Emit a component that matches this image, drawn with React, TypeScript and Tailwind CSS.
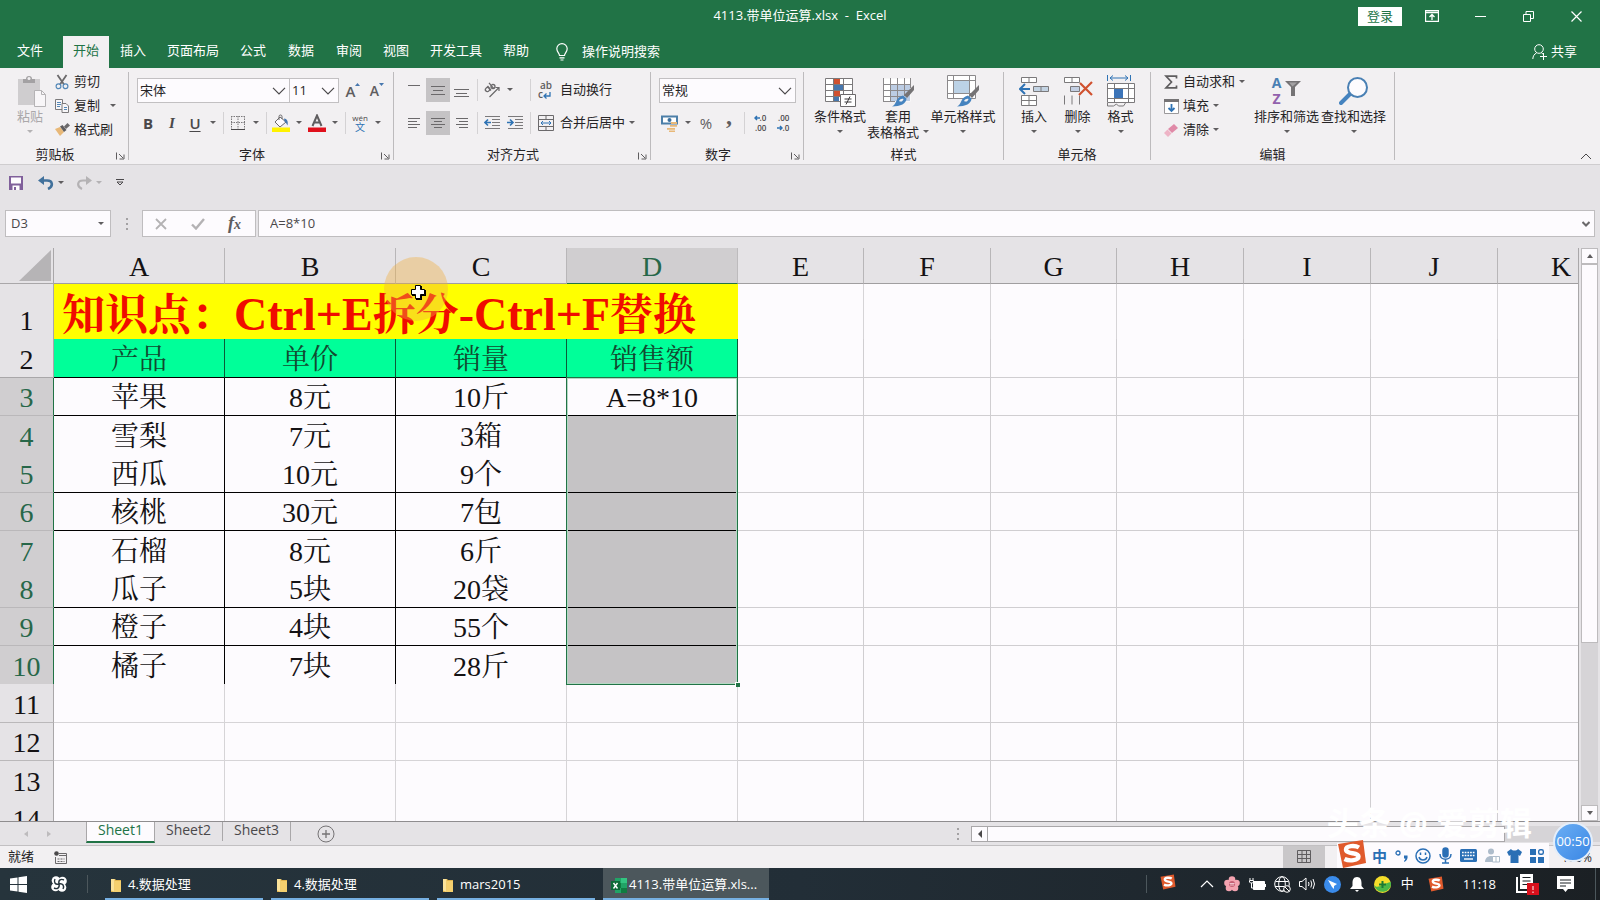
import React from "react";

const UI = "font-['Open_Sans','Noto_Sans_CJK_SC',sans-serif]";
const SONG = "font-['Liberation_Serif','Noto_Serif_CJK_SC','Noto_Sans_CJK_SC',serif]";

/* ---------- small shared pieces ---------- */

function Caret({ faint = false }: { faint?: boolean }) {
  return (
    <svg viewBox="0 0 6 4" className={faint ? "h-1 w-1.5 text-[#b4b2b4]" : "h-1 w-1.5 text-[#5f5d5f]"}>
      <path d="M0 0h6L3 3z" fill="currentColor" />
    </svg>
  );
}

function CaretButton({ label, faint }: { label: string; faint?: boolean }) {
  return (
    <button aria-label={label} className="flex h-6 w-3.5 shrink-0 items-center justify-center">
      <Caret faint={faint} />
    </button>
  );
}

function Tool({ label, wide, on, children }: { label: string; wide?: boolean; on?: boolean; children: React.ReactNode }) {
  return (
    <button
      aria-label={label}
      className={`flex h-6 shrink-0 items-center justify-center ${wide ? "w-6" : "w-[22px]"} ${on ? "bg-[#c5c3c5]" : ""}`}
    >
      {children}
    </button>
  );
}

function Divider() {
  return <span className="mx-[3px] h-[22px] w-px shrink-0 bg-[#d4d2d4]" />;
}

function Group({ title, width, launcher, children }: { title: string; width: string; launcher?: boolean; children: React.ReactNode }) {
  return (
    <>
      <section className={`flex shrink-0 flex-col ${width}`}>
        <div className="min-h-0 flex-1">{children}</div>
        <div className="flex h-5 items-center">
          <h2 className="flex-1 text-center text-[13px] leading-5">{title}</h2>
          {launcher && (
            <button aria-label={`${title}设置`} className="flex h-5 w-[18px] items-center pl-1.5 pt-1">
              <svg viewBox="0 0 9 8" className="h-2 w-[9px]" fill="none" stroke="#5f5d5f">
                <path d="M.5 7.500V.5M3 2l4 4M8 2.500V7H3.500" />
              </svg>
            </button>
          )}
        </div>
      </section>
      <span className="my-1 w-px shrink-0 bg-[#bdbbbd]" />
    </>
  );
}

function BigButton({ icon, label, second, width, faint }: { icon: React.ReactNode; label: string; second?: string; width: string; faint?: boolean }) {
  return (
    <button className={`flex shrink-0 flex-col items-center whitespace-nowrap pt-[7px] text-[13px] leading-4 ${width} ${faint ? "text-[#aaa8aa]" : ""}`}>
      <span className="mb-px flex h-8 items-center justify-center">{icon}</span>
      <span>{label}</span>
      <span className="flex h-4 items-center gap-1">
        {second}
        <Caret faint={faint} />
      </span>
    </button>
  );
}

function SmallButton({ icon, label, caret, gap }: { icon: React.ReactNode; label: string; caret?: boolean; gap?: boolean }) {
  return (
    <button className="flex h-6 items-center whitespace-nowrap text-[13px]">
      <span className="mr-0.5 flex w-5 justify-center">{icon}</span>
      {label}
      {caret && (
        <span className={gap ? "ml-2.5" : "ml-1"}>
          <Caret />
        </span>
      )}
    </button>
  );
}

function Combo({ label, value, width, options }: { label: string; value: string; width: string; options: string[] }) {
  return (
    <span className={`relative flex h-[25px] shrink-0 items-center border border-[#c2c0c2] bg-[#fdfbfe] ${width}`}>
      <select aria-label={label} defaultValue={value} className="h-full w-full appearance-none bg-transparent pl-0.5 text-[13px] outline-none">
        {options.map((o) => (
          <option key={o}>{o}</option>
        ))}
      </select>
      <svg viewBox="0 0 14 8" className="pointer-events-none absolute right-[3px] h-2 w-3.5" fill="none" stroke="#4a484a" strokeWidth="1.200">
        <path d="M1 .8l6 6 6-6" />
      </svg>
    </span>
  );
}

/* ---------- ribbon drawings ---------- */

const PasteIcon = () => (
  <svg viewBox="0 0 30 32" className="ml-1 h-8 w-[30px]">
    <path d="M1 4h22v26H1z" fill="#cfcdcf" />
    <path d="M6 4h3a3 3 0 0 1 6 0h3v4H6z" fill="#a3a1a3" />
    <circle cx="12" cy="3.500" r="1.500" fill="#f2f0f2" />
    <path d="M17.500 15.500h7l4 4v12h-11z" fill="#f8f6f8" stroke="#b5b3b5" />
    <path d="M24.500 15.500v4h4" fill="none" stroke="#b5b3b5" />
  </svg>
);
const ScissorsIcon = () => (
  <svg viewBox="0 0 14 16" className="h-4 w-3.5" fill="none">
    <path d="M2.500 1l6.500 9.500M11.500 1L5 10.500" stroke="#6b696b" strokeWidth="1.800" />
    <circle cx="3.500" cy="12.300" r="2.400" stroke="#5488b8" strokeWidth="1.200" />
    <circle cx="10.500" cy="12.300" r="2.400" stroke="#5488b8" strokeWidth="1.200" />
  </svg>
);
const CopyIcon = () => (
  <svg viewBox="0 0 16 16" className="h-4 w-4" fill="#f8f6f8" stroke="#7b797b">
    <path d="M1.500 1.500h7v10h-7z" />
    <path d="M3 4.500h4M3 6.500h4M3 8.500h3" stroke="#5488b8" />
    <path d="M8 5.500h4l2.500 2.500v6.500H8z" />
    <path d="M10 9.500h3M10 11.500h3" stroke="#5488b8" />
  </svg>
);
const BrushIcon = () => (
  <svg viewBox="0 0 16 14" className="h-3.5 w-4">
    <path d="M1 6l5-2 4 5-4 4z" fill="#e8b878" />
    <path d="M6 3.500l2.500-1.500 4 5L10 9z" fill="#5f5d5f" />
    <path d="M10 3.500L13.500 0 16 2.500 12 6z" fill="#6b696b" />
  </svg>
);
const BorderIcon = () => (
  <svg viewBox="0 0 16 16" className="h-4 w-4" fill="none" stroke="#7b797b">
    <path d="M1 1.500h14M1 7.500h14M1.500 1v14M8 1v14M14.500 1v14" strokeDasharray="1.500 1" />
    <path d="M1 14.500h14" stroke="#4a484a" />
  </svg>
);
const FillIcon = () => (
  <svg viewBox="0 0 18 18" className="h-[18px] w-[18px]">
    <path d="M8 3l6 5-6 5-5-5z" fill="#fdfbfe" stroke="#6b696b" />
    <path d="M7 6V2.500a1.500 1.500 0 0 1 3 0V5" fill="none" stroke="#6b696b" />
    <path d="M12 4.500c3 0 4.500 3 3.500 7-1-2-1.500-3-3-4z" fill="#4677ae" />
    <path d="M0 13.500h18v4.500H0z" fill="#fff200" />
  </svg>
);
const FontColorIcon = () => (
  <svg viewBox="0 0 18 18" className="h-[18px] w-[18px]">
    <path d="M4.500 12L9 1.500 13.500 12M6 8.500h6" fill="none" stroke="#5f5d5f" strokeWidth="2" />
    <path d="M0 13.500h18v4.500H0z" fill="#e0101c" />
  </svg>
);

function Lines({ d }: { d: string }) {
  return (
    <svg viewBox="0 0 16 16" className="h-4 w-4" stroke="#6b696b" fill="none">
      <path d={d} />
    </svg>
  );
}
function IndentIcon({ out }: { out?: boolean }) {
  return (
    <svg viewBox="0 0 16 16" className="h-4 w-4" fill="none">
      <path d="M1 1.500h15M8 4.500h8M8 7.500h8M8 10.500h8M1 13.500h15" stroke="#7b797b" />
      <path d={out ? "M7 7.500H1M4 4.500l-3 3 3 3" : "M0 7.500h6M3 4.500l3 3-3 3"} stroke="#2f73b4" strokeWidth="1.600" />
    </svg>
  );
}
const OrientIcon = () => (
  <svg viewBox="0 0 18 16" className="h-4 w-[18px]" fill="none" stroke="#6b696b">
    <path d="M6.500 15L16 5.500M12.500 5.500H16V9" strokeWidth="1.200" />
    <ellipse cx="4.500" cy="7.500" rx="2.200" ry="2" transform="rotate(-45 4.500 7.500)" strokeWidth="1.300" />
    <path d="M4.500 4L8 8.500M6 .8l5 6" strokeWidth="1.300" />
    <circle cx="10" cy="4.500" r="2" strokeWidth="1.300" />
  </svg>
);
const WrapIcon = () => (
  <span className="flex w-4 flex-col text-[10px] font-semibold leading-[9px] text-[#5f5d5f]">
    <span>ab</span>
    <span className="flex items-end">
      c
      <svg viewBox="0 0 8 7" className="h-[7px] w-2" fill="none" stroke="#2f73b4" strokeWidth="1.300">
        <path d="M7 0v4H1M3.500 1.500L1 4l2.500 2.500" />
      </svg>
    </span>
  </span>
);
const MergeIcon = () => (
  <svg viewBox="0 0 16 16" className="h-4 w-4" fill="none" stroke="#6b696b">
    <path d="M.5.5h15v15H.5zM.5 4.500h15M.5 11.500h15M8 .5v4M8 11.500v4" />
    <path d="M3 8h10M5 6L3 8l2 2M11 6l2 2-2 2" stroke="#2f73b4" />
  </svg>
);
const MoneyIcon = () => (
  <svg viewBox="0 0 18 18" className="h-[18px] w-[18px]">
    <path d="M1 2.500h15v7H1z" fill="#fff" stroke="#4d7fa8" strokeWidth="2" />
    <circle cx="8.500" cy="6" r="2" fill="#3c6f9b" />
    <path d="M10 8h6v2h-6zM9 11h7v1.800H9zM6 14h8v1.800H6zM8 16.500h6V18H8z" fill="#e8b878" />
  </svg>
);
function DecimalIcon({ more }: { more?: boolean }) {
  return (
    <span className="flex flex-col text-[8px] font-semibold leading-[10px] text-[#4a484a]">
      <span className="flex items-center justify-end">
        {more && <MiniArrow d="M6 3H1M3 1L1 3l2 2" />}
        {more ? ".0" : ".00"}
      </span>
      <span className="flex items-center justify-end">
        {!more && <MiniArrow d="M0 3h5M3 1l2 2-2 2" />}
        {more ? ".00" : ".0"}
      </span>
    </span>
  );
}
function MiniArrow({ d }: { d: string }) {
  return (
    <svg viewBox="0 0 6 6" className="h-1.5 w-1.5" fill="none" stroke="#2f73b4" strokeWidth="1.500">
      <path d={d} />
    </svg>
  );
}
const CondIcon = () => (
  <svg viewBox="0 0 32 32" className="h-8 w-8">
    <path d="M1.500 3.500h27v23h-27z" fill="#fff" />
    <path d="M10 3h6v6h-6zM10 15h6v6h-6z" fill="#d0512f" />
    <path d="M10 9h9v6h-9zM10 21h5v6h-5z" fill="#4677ae" />
    <path d="M1.500 3.500h27v23h-27zM1.500 9.500h27M1.500 15.500h27M1.500 21.500h27M9.500 3.500v23M19.500 3.500v23" fill="none" stroke="#7b797b" />
    <path d="M16.500 19.500h15v12h-15z" fill="#fff" stroke="#6b696b" />
    <path d="M20.500 24h7M20.500 27h7M26 21.500l-4 8" stroke="#3c3a3c" fill="none" />
  </svg>
);
const PaintTail = () => (
  <>
    <path d="M32 10v5l-7 8-3-3z" fill="#757375" />
    <path d="M21 20.500l3.500 3c0 5-6 8-14.500 8 5-2 3-9 11-11z" fill="#4583bf" />
    <path d="M17 26c1-2 3-2.500 4.500-2-.5 2-2 3.500-4.500 2z" fill="#f2f0f2" />
  </>
);
const TableFormatIcon = () => (
  <svg viewBox="0 0 32 32" className="h-8 w-8">
    <path d="M1.500 3.500h27v23h-27z" fill="#fff" />
    <path d="M8 9h20v17H8z" fill="#bccde4" />
    <path d="M1.500 3v23.500M1 9.500h28M1 15.500h28M1 21.500h21M8.500 3v23M15.500 3v23M22.500 3v18M28.500 3v10M1 26.500h12" fill="none" stroke="#8b898b" />
    <PaintTail />
  </svg>
);
const CellStyleIcon = () => (
  <svg viewBox="0 0 32 32" className="h-8 w-8">
    <path d="M.5.500h28v23H.5z" fill="#fff" />
    <path d="M7 6h15v12H7z" fill="#bcd2e6" />
    <path d="M.5.500h28v23H.5zM.5 5.500h28M.5 18.500h28M6.500.5v23M22.500.5v23" fill="none" stroke="#8b898b" />
    <PaintTail />
  </svg>
);
const InsertIcon = () => (
  <svg viewBox="0 0 30 32" className="h-8 w-[30px]" fill="#fff" stroke="#7b797b">
    <path d="M2.500 2.500h15v5h-15zM10 2.500v5M2.500 20.500h15v10h-15zM2.500 25.500h15M10 20.500v10" />
    <path d="M14.500 11.500h15v5h-15zM22 11.500v5" fill="#c3d3e3" />
    <path d="M11 14H1.500M6 9l-5 5 5 5" fill="none" stroke="#2f73b4" strokeWidth="2" />
  </svg>
);
const DeleteIcon = () => (
  <svg viewBox="0 0 30 32" className="h-8 w-[30px]" fill="#fff" stroke="#7b797b">
    <path d="M1.500 2.500h15v5h-15zM9 2.500v5M1.500 29.500v-9M9 29.500v-9M16.500 29.500v-9" />
    <path d="M7.500 11.500h9v5h-9z" fill="#c3cfe3" />
    <path d="M17 8l12 12M29 7L16 20" fill="none" stroke="#d0512f" strokeWidth="2.200" />
  </svg>
);
const FormatIcon = () => (
  <svg viewBox="0 0 30 32" className="h-8 w-[30px]" fill="none" stroke="#7b797b">
    <path d="M1.500 8.500h27v19h-27z" fill="#fff" />
    <path d="M1.500 13.500h27M1.500 23.500h27M8.500 8.500v19M22.500 8.500v19M1.500 28v3h6l3-2 2 2h5l2-3" />
    <path d="M8 14h9v9H8z" fill="#3c74b8" stroke="none" />
    <path d="M1.500 0v6M24.500 0v6M4 3h18M7 .5L4 3l3 2.500M19 .5L22 3l-3 2.500" stroke="#2f73b4" />
  </svg>
);
const SigmaIcon = () => (
  <svg viewBox="0 0 14 14" className="h-3.5 w-3.5" fill="none" stroke="#5f5d5f" strokeWidth="1.700">
    <path d="M12.500 3.500V1.200H2L7.500 7 2 12.800h10.500v-2.300" />
  </svg>
);
const FillDownIcon = () => (
  <svg viewBox="0 0 15 15" className="h-[15px] w-[15px]">
    <path d="M.5.500h14v14H.5z" fill="#fff" stroke="#9b999b" />
    <path d="M0 0h15v3H0z" fill="#757375" />
    <path d="M7.500 5v7M4.500 9l3 3 3-3" fill="none" stroke="#2f73b4" strokeWidth="1.800" />
  </svg>
);
const EraserIcon = () => (
  <svg viewBox="0 0 14 14" className="h-3.5 w-3.5">
    <path d="M4 6l6-5 4 4-6 5z" fill="#e08aa8" />
    <path d="M3.500 6.500l4 4L4 14 0 10z" fill="#eeb4c6" />
  </svg>
);
const SortIcon = () => (
  <span className="flex items-start gap-1">
    <span className="flex flex-col text-[14px] font-bold leading-4">
      <span className="text-[#4a80b4]">A</span>
      <span className="text-[#9261ad]">Z</span>
    </span>
    <svg viewBox="0 0 16 15" className="mt-1.5 h-[15px] w-4">
      <path d="M0 0h16l-6 6v9H6V6z" fill="#757375" />
      <path d="M7.500 5.500L12 1.500H4z" fill="#a3a1a3" />
    </svg>
  </span>
);
const FindIcon = () => (
  <svg viewBox="0 0 30 30" className="h-[30px] w-[30px]">
    <path d="M2 27l9-9" stroke="#4583bf" strokeWidth="4" strokeLinecap="round" />
    <circle cx="18.500" cy="11.500" r="9.500" fill="#fdfbfe" stroke="#4a80b4" strokeWidth="2" />
  </svg>
);

/* ---------- header ---------- */

const TABS: [string, string][] = [
  ["文件", "w-[60px] mr-[3px]"],
  ["开始", "w-[46px]"],
  ["插入", "w-12"],
  ["页面布局", "w-[72px]"],
  ["公式", "w-12"],
  ["数据", "w-12"],
  ["审阅", "w-12"],
  ["视图", "w-[46px]"],
  ["开发工具", "w-[74px]"],
  ["帮助", "w-[46px]"],
];

function TitleBar() {
  return (
    <header className="shrink-0 bg-[#217346] text-[13px] text-white">
      <div className="grid h-9 grid-cols-[1fr_auto_1fr] items-center pb-1">
        <span />
        <h1 className="whitespace-pre text-[13px]">4113.带单位运算.xlsx  -  Excel</h1>
        <div className="flex h-8 items-center justify-end pr-1.5">
          <button className="mr-3 h-[19px] w-11 bg-white leading-[19px] text-[#217346]">登录</button>
          <button aria-label="功能区显示选项" className="flex w-9 justify-center">
            <svg viewBox="0 0 14 12" className="h-3 w-3.5" fill="none" stroke="#fff">
              <path d="M.5.500h13v11H.5zM.5 2.500h13M7 10V5M4.500 7L7 4.500 9.500 7" strokeWidth="1.300" />
            </svg>
          </button>
          <button aria-label="最小化" className="ml-3 flex w-9 justify-center">
            <span className="h-px w-[11px] bg-white" />
          </button>
          <button aria-label="还原" className="ml-3 flex w-9 justify-center">
            <svg viewBox="0 0 11 11" className="h-[11px] w-[11px]" fill="none" stroke="#fff">
              <path d="M.5 3.500h7v7h-7zM3 3V.5h7.500v7H8" />
            </svg>
          </button>
          <button aria-label="关闭" className="ml-3 flex w-9 justify-center">
            <svg viewBox="0 0 11 11" className="h-[11px] w-[11px]" stroke="#fff" strokeWidth="1.200">
              <path d="M.5.500l10 10M10.500.5l-10 10" />
            </svg>
          </button>
        </div>
      </div>
      <nav className="flex h-8 items-center">
        {TABS.map(([name, w]) => (
          <button
            key={name}
            className={`flex h-8 shrink-0 items-center justify-center pb-0.5 ${w} ${name === "开始" ? "bg-[#f2f0f2] text-[#217346]" : ""}`}
          >
            {name}
          </button>
        ))}
        <label className="ml-[17px] flex items-center">
          <svg viewBox="0 0 12 18" className="mr-2.5 h-[18px] w-3" fill="none" stroke="#fff" strokeWidth="1.200">
            <path d="M3.500 12.500c0-2-2.700-3.500-2.700-6.700a5.200 5.200 0 0 1 10.400 0c0 3.200-2.700 4.700-2.700 6.700zM3.500 14.800h5M4.500 17h3" />
          </svg>
          <input aria-label="操作说明搜索" placeholder="操作说明搜索" className="w-28 bg-transparent pl-1 outline-none placeholder:text-white" />
        </label>
        <button className="ml-auto mr-[23px] flex items-center gap-1">
          <svg viewBox="0 0 15 16" className="h-4 w-[15px]" fill="none" stroke="#fff">
            <circle cx="7" cy="5" r="4.300" />
            <path d="M.8 15c.2-3 1.500-5 3.700-6M9.500 9l1.500 1M8 12.500h7M11.500 9v7" />
          </svg>
          共享
        </button>
      </nav>
    </header>
  );
}

function Ribbon() {
  return (
    <div className="flex h-[97px] shrink-0 border-b border-[#cfcdcf] bg-[#f2f0f2] text-[#262426]">
      <Group title="剪贴板" width="w-[128px]" launcher>
        <div className="flex">
          <BigButton icon={<PasteIcon />} label="粘贴" width="w-[52px] ml-1" faint />
          <div className="-ml-1 flex flex-col pt-0.5">
            <SmallButton icon={<ScissorsIcon />} label="剪切" />
            <SmallButton icon={<CopyIcon />} label="复制" caret gap />
            <SmallButton icon={<BrushIcon />} label="格式刷" />
          </div>
        </div>
      </Group>

      <Group title="字体" width="w-[264px]" launcher>
        <div className="flex flex-col gap-2 pt-2.5">
          <div className="flex items-center pl-2">
            <Combo label="字体" value="宋体" width="w-[153px]" options={["宋体", "黑体"]} />
            <Combo label="字号" value="11" width="-ml-px w-[50px]" options={["11", "12"]} />
            <button aria-label="增大字号" className="ml-0.5 flex w-6 items-start justify-center text-[15px] font-semibold leading-6 text-[#5f5d5f]">
              A
              <svg viewBox="0 0 5 3" className="mt-1 h-[3px] w-[5px]">
                <path d="M0 3h5L2.500 0z" fill="#4677ae" />
              </svg>
            </button>
            <button aria-label="减小字号" className="flex w-6 items-start justify-center text-[14px] font-semibold leading-6 text-[#5f5d5f]">
              A
              <svg viewBox="0 0 5 3" className="mt-1 h-[3px] w-[5px]">
                <path d="M0 0h5L2.500 3z" fill="#4677ae" />
              </svg>
            </button>
          </div>
          <div className="flex items-center pl-[7px] text-[15px] text-[#4a484a]">
            <Tool label="加粗" wide><b>B</b></Tool>
            <Tool label="倾斜" wide><i className="font-['Liberation_Serif',serif] font-bold">I</i></Tool>
            <Tool label="下划线"><span className="font-semibold underline underline-offset-2">U</span></Tool>
            <CaretButton label="下划线选项" />
            <Divider />
            <Tool label="边框"><BorderIcon /></Tool>
            <CaretButton label="边框选项" />
            <Divider />
            <Tool label="填充颜色"><FillIcon /></Tool>
            <CaretButton label="填充颜色选项" />
            <Tool label="字体颜色"><FontColorIcon /></Tool>
            <CaretButton label="字体颜色选项" />
            <Divider />
            <Tool label="拼音">
              <span className="flex flex-col items-center text-[8px] leading-[9px]">
                wén
                <span className="text-[10px] leading-[11px] text-[#2f73b4]">文</span>
              </span>
            </Tool>
            <CaretButton label="拼音选项" />
          </div>
        </div>
      </Group>

      <Group title="对齐方式" width="w-[256px]" launcher>
        <div className="flex flex-col gap-[9px] pt-2.5">
          <div className="flex items-center pl-2">
            <Tool label="顶端对齐" wide><Lines d="M2 3.500h12" /></Tool>
            <Tool label="垂直居中" wide on><Lines d="M1 4.500h14M3 8.500h10M1 12.500h14" /></Tool>
            <Tool label="底端对齐" wide><Lines d="M0 7.500h15M2 11.500h11M0 14.500h15" /></Tool>
            <Divider />
            <Tool label="方向"><OrientIcon /></Tool>
            <CaretButton label="方向选项" />
            <span className="w-2.5" />
            <Divider />
            <button className="flex items-center whitespace-nowrap text-[13px]">
              <span className="mr-0.5 flex w-6 justify-center"><WrapIcon /></span>自动换行
            </button>
          </div>
          <div className="flex items-center pl-2">
            <Tool label="左对齐" wide><Lines d="M2 3.500h12M2 6.500h9M2 9.500h12M2 12.500h9" /></Tool>
            <Tool label="居中" wide on><Lines d="M1 3.500h14M4 6.500h8M1 9.500h14M4 12.500h8" /></Tool>
            <Tool label="右对齐" wide><Lines d="M2 3.500h12M5 6.500h9M2 9.500h12M5 12.500h9" /></Tool>
            <Divider />
            <Tool label="减少缩进"><IndentIcon out /></Tool>
            <Tool label="增加缩进" wide><IndentIcon /></Tool>
            <Divider />
            <button className="flex items-center whitespace-nowrap text-[13px]">
              <span className="mr-0.5 flex w-6 justify-center"><MergeIcon /></span>合并后居中
            </button>
            <CaretButton label="合并选项" />
          </div>
        </div>
      </Group>

      <Group title="数字" width="w-[152px]" launcher>
        <div className="flex flex-col gap-2 pl-2 pt-2.5">
          <Combo label="数字格式" value="常规" width="w-[137px]" options={["常规", "数值"]} />
          <div className="flex items-center text-[15px] text-[#5f5d5f]">
            <Tool label="会计数字格式"><MoneyIcon /></Tool>
            <CaretButton label="会计数字格式选项" />
            <Tool label="百分比样式">%</Tool>
            <Tool label="千位分隔样式" wide>
              <b className="pb-3.5 font-['Liberation_Serif',serif] text-2xl leading-4">,</b>
            </Tool>
            <Divider />
            <Tool label="增加小数位数" wide><DecimalIcon more /></Tool>
            <Tool label="减少小数位数"><DecimalIcon /></Tool>
          </div>
        </div>
      </Group>

      <Group title="样式" width="w-[199px]">
        <div className="flex pl-2">
          <BigButton icon={<CondIcon />} label="条件格式" width="w-14" />
          <BigButton icon={<TableFormatIcon />} label="套用" second="表格格式" width="w-[60px]" />
          <BigButton icon={<CellStyleIcon />} label="单元格样式" width="w-[70px]" />
        </div>
      </Group>

      <Group title="单元格" width="w-[146px]">
        <div className="flex pl-2">
          <BigButton icon={<InsertIcon />} label="插入" width="w-11" />
          <BigButton icon={<DeleteIcon />} label="删除" width="w-[43px]" />
          <BigButton icon={<FormatIcon />} label="格式" width="w-[43px]" />
        </div>
      </Group>

      <Group title="编辑" width="w-[243px]">
        <div className="flex pl-2.5">
          <div className="flex w-[92px] flex-col pt-0.5">
            <SmallButton icon={<SigmaIcon />} label="自动求和" caret />
            <SmallButton icon={<FillDownIcon />} label="填充" caret />
            <SmallButton icon={<EraserIcon />} label="清除" caret />
          </div>
          <BigButton icon={<SortIcon />} label="排序和筛选" width="w-[67px]" />
          <BigButton icon={<FindIcon />} label="查找和选择" width="w-[67px]" />
        </div>
      </Group>

      <button aria-label="折叠功能区" className="mb-1 ml-auto mr-2 self-end">
        <svg viewBox="0 0 12 7" className="h-[7px] w-3" fill="none" stroke="#4a484a">
          <path d="M1 6l5-5 5 5" />
        </svg>
      </button>
    </div>
  );
}

function QuickAccess() {
  return (
    <div className="flex h-[35px] shrink-0 items-center pl-2">
      <button aria-label="保存" className="flex w-4 justify-center">
        <svg viewBox="0 0 14 14" className="h-3.5 w-3.5">
          <path d="M0 0h14v14H0z" fill="#80609b" />
          <path d="M2 1.500h10v6H2zM3.500 9.500h7V14h-7z" fill="#fdfbfe" />
          <path d="M5 11h2v3H5z" fill="#80609b" />
        </svg>
      </button>
      <button aria-label="撤销" className="ml-3.5 flex w-4 justify-center">
        <svg viewBox="0 0 16 14" className="h-3.5 w-4" fill="none">
          <path d="M3 4.500h6c6 0 6.500 6 1 8.500" stroke="#41719c" strokeWidth="2.600" />
          <path d="M0 4.500L6 0v9z" fill="#41719c" />
        </svg>
      </button>
      <CaretButton label="撤销选项" />
      <button aria-label="重做" className="ml-2 flex w-4 justify-center">
        <svg viewBox="0 0 16 14" className="h-3.5 w-4" fill="none">
          <path d="M13 4.500H7c-6 0-6.500 6-1 8.500" stroke="#b4b2b4" strokeWidth="2.200" />
          <path d="M16 4.500L10 0v9z" fill="#b4b2b4" />
        </svg>
      </button>
      <CaretButton label="重做选项" faint />
      <button aria-label="自定义快速访问工具栏" className="ml-2 flex w-3 justify-center">
        <svg viewBox="0 0 8 7" className="h-[7px] w-2" fill="none" stroke="#4a484a">
          <path d="M0 .5h8M1 3l3 3 3-3z" />
        </svg>
      </button>
    </div>
  );
}

function FormulaBar() {
  return (
    <div className="flex h-12 shrink-0 px-[5px] pb-[11px] pt-2.5 text-[13px] text-[#4a484a]">
      <label className="flex w-[106px] items-center border border-[#bfbdbf] bg-[#fdfbfe] pr-1.5">
        <input aria-label="名称框" defaultValue="D3" className="w-0 flex-1 bg-transparent pl-[5px] outline-none" />
        <Caret />
      </label>
      <span className="flex w-[31px] flex-col items-center justify-center gap-[3px]">
        <span className="h-0.5 w-0.5 bg-[#a3a1a3]" />
        <span className="h-0.5 w-0.5 bg-[#a3a1a3]" />
        <span className="h-0.5 w-0.5 bg-[#a3a1a3]" />
      </span>
      <div className="flex w-[114px] items-center justify-between border border-[#bfbdbf] bg-[#fdfbfe] pl-3 pr-3.5">
        <button aria-label="取消">
          <svg viewBox="0 0 12 12" className="h-3 w-3" stroke="#b4b2b4" strokeWidth="1.800">
            <path d="M1 1l10 10M11 1L1 11" />
          </svg>
        </button>
        <button aria-label="输入">
          <svg viewBox="0 0 14 12" className="h-3 w-3.5" fill="none" stroke="#b4b2b4" strokeWidth="2.400">
            <path d="M1 6.500l4 4L13 1" />
          </svg>
        </button>
        <button aria-label="插入函数" className="font-['Liberation_Serif',serif] text-lg font-bold italic leading-5 text-[#5f5d5f]">
          f<span className="text-sm">x</span>
        </button>
      </div>
      <label className="ml-0.5 flex flex-1 items-center border border-[#bfbdbf] bg-[#fdfbfe] pr-1">
        <input aria-label="编辑栏" defaultValue="A=8*10" className="flex-1 bg-transparent pl-[11px] outline-none" />
        <svg viewBox="0 0 8 6" className="h-1.5 w-2" fill="none" stroke="#6b696b" strokeWidth="2">
          <path d="M.5 1L4 4.500 7.500 1" />
        </svg>
      </label>
    </div>
  );
}

/* ---------- sheet ---------- */

const COLUMNS = ["A", "B", "C", "D", "E", "F", "G", "H", "I", "J", "K"];

interface RowSpec {
  n: number;
  cells?: string[];
  tall?: boolean;
  open?: boolean;
}

const ROWS: RowSpec[] = [
  { n: 3, cells: ["苹果", "8元", "10斤", "A=8*10"] },
  { n: 4, cells: ["雪梨", "7元", "3箱", ""], tall: true, open: true },
  { n: 5, cells: ["西瓜", "10元", "9个", ""] },
  { n: 6, cells: ["核桃", "30元", "7包", ""] },
  { n: 7, cells: ["石榴", "8元", "6斤", ""], tall: true, open: true },
  { n: 8, cells: ["瓜子", "5块", "20袋", ""] },
  { n: 9, cells: ["橙子", "4块", "55个", ""] },
  { n: 10, cells: ["橘子", "7块", "28斤", ""], open: true },
  { n: 11, tall: true },
  { n: 12 },
  { n: 13, tall: true, open: true },
  { n: 14 },
];

const REST = COLUMNS.slice(4);

function Sheet() {
  return (
    <div className="flex min-h-0 flex-1">
      <div className="relative min-w-0 flex-1 overflow-hidden border-r border-[#a9a7a9] bg-[#fdfbfe]">
        <table className={`w-[1623px] table-fixed border-separate border-spacing-0 text-center text-[28px] leading-[34px] text-[#141214] ${SONG}`}>
          <colgroup>
            <col className="w-[54px]" />
            {COLUMNS.map((c, i) => (
              <col key={c} className={i < 4 ? "w-[171px]" : c === "E" || c === "G" ? "w-[126px]" : "w-[127px]"} />
            ))}
          </colgroup>
          <thead>
            <tr className="h-9 bg-[#e5e3e6]">
              <th className="border-b border-r border-[#a9a7a9] p-0">
                <svg viewBox="0 0 32 32" className="ml-auto mr-0.5 h-8 w-8">
                  <path d="M32 0v31H0z" fill="#b6b4b6" />
                </svg>
              </th>
              {COLUMNS.map((c) => (
                <th
                  key={c}
                  scope="col"
                  className={
                    c === "D"
                      ? "border-b border-r border-b-[#217346] border-r-[#bdbbbd] bg-[#d0ced0] p-0 pt-[3px] font-normal leading-8 text-[#276749]"
                      : "border-b border-r border-b-[#a09ea0] border-r-[#b8b6b8] p-0 pt-[3px] font-normal leading-8"
                  }
                >
                  {c}
                </th>
              ))}
            </tr>
          </thead>
          <tbody>
            <tr className="h-[54px]">
              <th scope="row" className="border-r border-[#a9a7a9] bg-[#e5e3e6] p-0 pt-[18px] font-normal">1</th>
              <td colSpan={4} className="whitespace-nowrap bg-[#ffff00] p-0 pl-2 pt-2 text-left text-[43px] font-bold leading-[46px] text-[#f00c00]">
                知识点：<span className="text-[46px]">Ctrl+E</span>拆分<span className="text-[46px]">-Ctrl+F</span>替换
              </td>
              {REST.map((c) => (
                <td key={c} className="border-r border-[#d6d4d7]" />
              ))}
            </tr>
            <tr className="h-[39px]">
              <th scope="row" className="border-b border-r border-[#a9a7a9] bg-[#e5e3e6] p-0 pt-[3px] font-normal">2</th>
              {["产品", "单价", "销量", "销售额"].map((t) => (
                <td key={t} className="border-b border-r border-b-black border-r-[#0b5a38] bg-[#00ff99] p-0 pt-[3px] text-[#124a30]">{t}</td>
              ))}
              {REST.map((c) => (
                <td key={c} className="border-b border-r border-[#d0ced1]" />
              ))}
            </tr>
            {ROWS.map((r) => (
              <tr key={r.n} className={r.tall ? "h-[39px]" : "h-[38px]"}>
                <th
                  scope="row"
                  className={`border-r p-0 pt-[3px] font-normal ${
                    r.cells ? "border-r-[#217346] bg-[#d0ced0] text-[#276749]" : "border-r-[#a9a7a9] bg-[#e5e3e6]"
                  } ${r.open ? "" : "border-b border-b-[#bab8ba]"}`}
                >
                  {r.n}
                </th>
                {COLUMNS.slice(0, 4).map((c, i) => {
                  const filled = !!r.cells;
                  const edge = filled ? "border-r border-black" : "border-r border-[#d6d4d7]";
                  const line = r.open ? "" : "border-b";
                  const shade = filled && i === 3 && r.n > 3 ? "bg-[#c5c3c5]" : "";
                  return (
                    <td key={c} className={`relative p-0 pt-[3px] ${edge} ${line} ${shade}`}>
                      {r.cells?.[i]}
                      {r.n === 3 && i === 3 && (
                        <span className="pointer-events-none absolute -left-px -top-px z-10 h-[308px] w-[172px] border border-[#217346] outline outline-1 -outline-offset-2 outline-[#b5d8c4]">
                          <span className="absolute -bottom-[3px] -right-[3px] h-[5px] w-[5px] border-l border-t border-white bg-[#217346]" />
                        </span>
                      )}
                    </td>
                  );
                })}
                {REST.map((c) => (
                  <td key={c} className={`border-r border-[#d0ced1] ${r.open ? "" : "border-b"}`} />
                ))}
              </tr>
            ))}
          </tbody>
        </table>
        <span className="pointer-events-none absolute left-96 top-[9px] h-16 w-16 rounded-full bg-[#f0b040]/40" />
        <svg viewBox="0 0 16 16" className="pointer-events-none absolute left-[410px] top-9 h-4 w-4">
          <path d="M6 2h6v4h4v6h-4v4H6v-4H2V6h4z" fill="#000" />
          <path d="M5.500 1.500h5v4h4v5h-4v4h-5v-4h-4v-5h4z" fill="#fff" stroke="#000" />
        </svg>
      </div>
      <div className="flex w-[21px] shrink-0 flex-col px-0.5">
        <button aria-label="向上滚动" className="flex h-4 items-center justify-center border border-[#bdbbbd] bg-[#fdfbfe]">
          <svg viewBox="0 0 6 4" className="h-1 w-1.5"><path d="M0 4h6L3 0z" fill="#5f5d5f" /></svg>
        </button>
        <div className="flex min-h-0 flex-1 flex-col bg-[#d6d4d7]">
          <div className="h-[70%] border border-[#bdbbbd] bg-[#fdfbfe]" />
        </div>
        <button aria-label="向下滚动" className="flex h-4 items-center justify-center border border-[#bdbbbd] bg-[#fdfbfe]">
          <svg viewBox="0 0 6 4" className="h-1 w-1.5"><path d="M0 0h6L3 4z" fill="#5f5d5f" /></svg>
        </button>
      </div>
    </div>
  );
}

function SheetTabs() {
  return (
    <div className="flex h-6 shrink-0 border-t border-[#8f8d8f] text-sm leading-4 text-[#4a484a]">
      <div className="flex w-[86px] items-center justify-center gap-[19px] pr-3">
        <svg viewBox="0 0 4 6" className="h-1.5 w-1"><path d="M4 0v6L0 3z" fill="#bdbbbd" /></svg>
        <svg viewBox="0 0 4 6" className="h-1.5 w-1"><path d="M0 0v6l4-3z" fill="#bdbbbd" /></svg>
      </div>
      <button className="mb-0.5 flex w-[69px] items-start justify-center border-x border-b-2 border-x-[#a9a7a9] border-b-[#217346] bg-[#fdfbfe] text-[#217346]">
        Sheet1
      </button>
      <button className="mb-1 flex w-[68px] items-start justify-center border-r border-[#a9a7a9]">Sheet2</button>
      <button className="mb-1 flex w-[68px] items-start justify-center border-r border-[#a9a7a9]">Sheet3</button>
      <button aria-label="新工作表" className="ml-[26px] flex items-center">
        <svg viewBox="0 0 18 18" className="h-[18px] w-[18px]" fill="none" stroke="#757375">
          <circle cx="9" cy="9" r="8" />
          <path d="M9 5v8M5 9h8" strokeWidth="1.300" />
        </svg>
      </button>
      <div className="ml-auto flex w-[643px] items-center">
        <span className="mr-3 flex flex-col gap-[3px]">
          <span className="h-0.5 w-0.5 bg-[#a3a1a3]" />
          <span className="h-0.5 w-0.5 bg-[#a3a1a3]" />
          <span className="h-0.5 w-0.5 bg-[#a3a1a3]" />
        </span>
        <button aria-label="向左滚动" className="flex h-4 w-[17px] items-center justify-center border border-[#a9a7a9] bg-[#fdfbfe]">
          <svg viewBox="0 0 4 8" className="h-2 w-1"><path d="M4 0v8L0 4z" fill="#4a484a" /></svg>
        </button>
        <span className="-ml-px h-4 w-[518px] border border-[#a9a7a9] bg-[#fdfbfe]" />
        <span className="h-4 flex-1 bg-[#d6d4d7]" />
      </div>
    </div>
  );
}

const BLUE = "#2a6fb5";

function SogouMark({ size }: { size: string }) {
  return (
    <svg viewBox="0 0 30 30" className={size}>
      <path d="M1 5L26 1l3 23L6 29z" fill="#e05a2c" />
      <path d="M22 8.500c-4-2.500-13-2-13 2 0 5 12.500 2.500 12.500 7 0 4-9 5-14 2.500" fill="none" stroke="#fff" strokeWidth="4.400" />
    </svg>
  );
}

function ImeBar() {
  return (
    <div className="absolute bottom-0 right-[51px] flex h-[25px] w-[212px] items-center bg-[#fdfbfe] text-[#2a6fb5]">
      <SogouMark size="-mt-1 h-[30px] w-[30px] shrink-0" />
      <div className="flex flex-1 items-center justify-between px-[5px]">
        <span className="text-[15px] font-bold leading-5">中</span>
        <svg viewBox="0 0 13 12" className="h-3 w-[13px]">
          <circle cx="3" cy="3" r="2" fill="none" stroke={BLUE} strokeWidth="1.300" />
          <path d="M9 5.500h3.500c.5 3-.5 5-3 6.500l-.5-1c1-1 1.300-1.500 1.300-2.500H9z" fill={BLUE} />
        </svg>
        <svg viewBox="0 0 16 16" className="h-4 w-4" fill="none" stroke={BLUE} strokeWidth="1.500">
          <circle cx="8" cy="8" r="7" />
          <path d="M4 9c1 4 7 4 8 0" />
          <path d="M5.500 4.500v2.500M10.500 4.500v2.500" />
        </svg>
        <svg viewBox="0 0 13 17" className="h-[17px] w-[13px]" fill="none" stroke={BLUE} strokeWidth="1.500">
          <rect x="4" y="1" width="5" height="9" rx="2.500" fill={BLUE} />
          <path d="M1 7c0 7 11 7 11 0M6.500 12v3.500M3 16h7" />
        </svg>
        <svg viewBox="0 0 17 13" className="h-[13px] w-[17px]">
          <rect width="17" height="13" rx="1.500" fill={BLUE} />
          <path d="M2 3.500h13M2 6.500h13" stroke="#fff" strokeWidth="1.400" strokeDasharray="1.700 1" />
          <path d="M4 10h9" stroke="#fff" strokeWidth="1.400" />
        </svg>
        <svg viewBox="0 0 15 15" className="h-[15px] w-[15px]">
          <circle cx="6" cy="3.500" r="3" fill="#aebccb" />
          <path d="M0 14c0-8 12-8 12 0z" fill="#aebccb" />
          <path d="M7.500 8.500h7v5.500h-7zM11 8.500V14" fill="#fff" stroke="#aebccb" />
        </svg>
        <svg viewBox="0 0 15 14" className="h-3.5 w-[15px]">
          <path d="M4 0c1.500 2 5.500 2 7 0l4 3-2 4-1.500-1v8h-8V6L2 7 0 3z" fill={BLUE} />
        </svg>
        <svg viewBox="0 0 14 14" className="h-3.5 w-3.5">
          <path d="M0 0h6v6H0zM0 8h6v6H0zM8 8h6v6H8z" fill={BLUE} />
          <rect x="8.700" y=".7" width="4.600" height="4.600" rx="1.500" fill="none" stroke={BLUE} strokeWidth="1.400" />
        </svg>
      </div>
    </div>
  );
}

function StatusBar() {
  return (
    <div className="relative flex h-[23px] shrink-0 items-center border-t border-[#c2c0c2] bg-[#f2f0f2] text-[13px] text-[#262426]">
      <span className="ml-2 w-[46px]">就绪</span>
      <svg viewBox="0 0 13 13" className="h-[13px] w-[13px]" fill="none" stroke="#6b696b">
        <path d="M5 2.500h7.500v10H1.500V6M5 4.500h7" />
        <path d="M3.500 8h7M3.500 10.500h7" strokeDasharray="2 1" />
        <circle cx="2.500" cy="2.500" r="2.300" fill="#4a484a" stroke="none" />
      </svg>
      <button aria-label="普通视图" className="ml-auto mr-[275px] flex h-full w-[42px] items-center justify-center bg-[#c9c7c9]">
        <svg viewBox="0 0 14 14" className="h-3.5 w-3.5" fill="none" stroke="#5f5d5f">
          <path d="M.5.500h13v12H.5zM.5 4.500h13M.5 8.500h13M5 .5v12M9.500.5v12" />
        </svg>
      </button>
      <span className="absolute bottom-0.5 right-2 text-xs">100%</span>
      <ImeBar />
      <span className="pointer-events-none absolute bottom-[26px] right-[68px] whitespace-nowrap text-[32px] font-bold leading-[38px] text-white">
        头条 @ 爱剪辑
      </span>
      <span className="absolute -top-6 right-[7px] flex h-10 w-10 items-center justify-center rounded-full border-2 border-[#e4eefa] bg-gradient-to-br from-[#6aaef4] to-[#3a86e4] text-[13px] text-white">
        00:50
      </span>
    </div>
  );
}

/* ---------- taskbar ---------- */

const FolderIcon = () => (
  <svg viewBox="0 0 12 14" className="h-3.5 w-3">
    <path d="M1 1h4l1 1h5v12H1z" fill="#e0b34c" />
    <path d="M1 1h3.500v13L1 12.500z" fill="#fbe39a" />
    <path d="M4.500 3H11v11H4.500z" fill="#f5d06e" />
  </svg>
);
const ExcelIcon = () => (
  <svg viewBox="0 0 16 15" className="h-[15px] w-4">
    <path d="M4 0h12v15H4z" fill="#21a366" />
    <path d="M10 0h6v5h-6z" fill="#33c481" />
    <path d="M4 5h6v5H4zM10 10h6v5h-6z" fill="#107c41" />
    <path d="M0 3h9v9H0z" fill="#0f6a38" />
    <path d="M2.500 5l4 5.500M6.500 5l-4 5.500" stroke="#fff" strokeWidth="1.400" />
  </svg>
);

function Task({ icon, label, active }: { icon: React.ReactNode; label: string; active?: boolean }) {
  return (
    <button
      className={`flex h-full shrink-0 items-center whitespace-nowrap border-b-2 border-[#76b0e2] pt-1 text-[13px] ${
        active ? "w-[166px] bg-[#4c575c] pl-2" : "mr-2 w-[158px] pl-[5px]"
      }`}
    >
      <span className={active ? "mr-0.5" : "mr-1.5"}>{icon}</span>
      {label}
    </button>
  );
}

function TrayItem({ label, children }: { label: string; children: React.ReactNode }) {
  return (
    <button aria-label={label} className="flex w-[25px] shrink-0 items-center justify-center">
      {children}
    </button>
  );
}

function Taskbar() {
  return (
    <footer className="flex h-8 shrink-0 items-center bg-gradient-to-r from-[#26343c] via-[#222e37] to-[#1b2024] text-white">
      <button aria-label="开始菜单" className="ml-2.5 w-[17px]">
        <svg viewBox="0 0 17 17" className="h-[17px] w-[17px]" fill="#fff">
          <path d="M0 2.500l7.500-1V8H0zM8.500 1.300L17 0v8H8.500zM0 9h7.500v6.500L0 14.500zM8.500 9H17v8l-8.500-1.300z" />
        </svg>
      </button>
      <button aria-label="应用中心" className="ml-6">
        <svg viewBox="0 0 16 16" className="h-4 w-4">
          <g fill="#fff">
            <circle cx="5" cy="4.500" r="4.300" />
            <circle cx="11.500" cy="5" r="4.300" />
            <circle cx="11" cy="11.500" r="4.300" />
            <circle cx="4.500" cy="11" r="4.300" />
          </g>
          <path d="M8 8C7 4 10 2.500 13 4M8 8c4-1 5.500 2 4 5M8 8c1 4-2 5.500-5 4M8 8C4 9 2.500 6 4 3" fill="none" stroke="#26343c" strokeWidth="1.400" />
        </svg>
      </button>
      <span className="ml-5 mr-[17px] h-[18px] w-px bg-[#4c575c]" />
      <Task icon={<FolderIcon />} label="4.数据处理" />
      <Task icon={<FolderIcon />} label="4.数据处理" />
      <Task icon={<FolderIcon />} label="mars2015" />
      <Task icon={<ExcelIcon />} label="4113.带单位运算.xls..." active />

      <div className="ml-auto flex h-full items-center">
        <span className="mr-[9px] h-[18px] w-px bg-[#4c575c]" />
        <TrayItem label="搜狗工具"><SogouMark size="mb-1 h-4 w-4" /></TrayItem>
        <span className="w-3.5" />
        <TrayItem label="显示隐藏的图标">
          <svg viewBox="0 0 14 8" className="h-2 w-3.5" fill="none" stroke="#fff" strokeWidth="1.200"><path d="M1 7l6-6 6 6" /></svg>
        </TrayItem>
        <TrayItem label="樱花">
          <svg viewBox="0 0 16 16" className="h-4 w-4">
            <g fill="#f4a3b0">
              <circle cx="8" cy="3.500" r="3.300" /><circle cx="3.500" cy="7" r="3.300" /><circle cx="12.500" cy="7" r="3.300" />
              <circle cx="5" cy="12" r="3.300" /><circle cx="11" cy="12" r="3.300" />
            </g>
            <circle cx="8" cy="8" r="3" fill="#c75f74" />
            <path d="M5.500 7.500h5M6 9h4" stroke="#fbe0e4" strokeWidth=".8" />
          </svg>
        </TrayItem>
        <TrayItem label="电池">
          <svg viewBox="0 0 17 13" className="h-[13px] w-[17px]" fill="none" stroke="#fff">
            <path d="M4.500 3.500h11v8h-11z" fill="#fff" /><path d="M16.500 6v3M1 0v2M4 0v2M.5 2.500h4v1.500l-1 1h-2l-1-1zM2.500 5v5h2" />
          </svg>
        </TrayItem>
        <TrayItem label="网络">
          <svg viewBox="0 0 17 17" className="h-[17px] w-[17px]" fill="none" stroke="#fff">
            <circle cx="8" cy="8" r="7.300" /><ellipse cx="8" cy="8" rx="3.300" ry="7.300" /><path d="M1.500 5.500h13M1 10.500h9" />
            <circle cx="13" cy="13" r="3.300" fill="#1b2024" /><path d="M10.800 10.800l4.400 4.400" />
          </svg>
        </TrayItem>
        <TrayItem label="音量">
          <svg viewBox="0 0 17 14" className="h-3.5 w-[17px]" fill="none" stroke="#fff">
            <path d="M.5 4.500H3l4-3.500v12L3 9.500H.5z" /><path d="M9.500 5q1 2 0 4M11.800 3.500q2 3.500 0 7M14 2q3 5 0 10" />
          </svg>
        </TrayItem>
        <TrayItem label="消息助手">
          <svg viewBox="0 0 17 17" className="h-[17px] w-[17px]">
            <circle cx="8.500" cy="8.500" r="8.500" fill="#3a8bea" /><path d="M4 4l9 4-3 2v3l-2-2z" fill="#fff" />
          </svg>
        </TrayItem>
        <TrayItem label="提醒">
          <svg viewBox="0 0 14 15" className="h-[15px] w-3.5" fill="#fff">
            <path d="M7 0c-3.500 0-4.500 3-4.500 6v3L0 12h14l-2.500-3V6c0-3-1-6-4.500-6zM5 13h4l-2 2z" />
          </svg>
        </TrayItem>
        <TrayItem label="安全卫士">
          <svg viewBox="0 0 17 17" className="h-[17px] w-[17px]">
            <circle cx="8.500" cy="8.500" r="8.500" fill="#f4dd2a" /><path d="M0 8.500C3 14 8 8 17 6a8.500 8.500 0 0 1-17 2.500z" fill="#4cb748" />
            <path d="M8.500 5v7M5 8.500h7" stroke="#1b7a34" strokeWidth="2" />
          </svg>
        </TrayItem>
        <TrayItem label="输入法">
          <span className="text-[13px]">中</span>
        </TrayItem>
        <span className="w-1" />
        <TrayItem label="搜狗输入法"><SogouMark size="h-4 w-4" /></TrayItem>
        <time className="ml-3.5 pt-0.5 text-[13px]">11:18</time>
        <button aria-label="便笺" className="ml-5">
          <svg viewBox="0 0 24 22" className="h-[22px] w-6">
            <path d="M0 4h2v14h11v2H0z" fill="#fff" /><path d="M4 1h13v15H4z" fill="#fff" />
            <path d="M6.500 4.500h8M6.500 8h8M6.500 11.500h5" stroke="#1b2024" />
            <path d="M11 10h12v12H11z" fill="#d8101c" /><path d="M17 13v4M17 18.500V20" stroke="#fff" />
          </svg>
        </button>
        <button aria-label="操作中心" className="ml-[17px] mr-[21px]">
          <svg viewBox="0 0 17 16" className="h-4 w-[17px]">
            <path d="M0 0h17v13h-6l-2.500 3L6 13H0z" fill="#fff" /><path d="M3 4h11M3 7h11M3 10h6" stroke="#1b2024" />
          </svg>
        </button>
        <span className="mr-1 h-full w-px bg-[#4c575c]" />
      </div>
    </footer>
  );
}

export default function App() {
  return (
    <div className={`flex h-screen flex-col overflow-hidden bg-[#e5e3e6] ${UI}`}>
      <TitleBar />
      <Ribbon />
      <QuickAccess />
      <FormulaBar />
      <Sheet />
      <SheetTabs />
      <StatusBar />
      <Taskbar />
    </div>
  );
}
